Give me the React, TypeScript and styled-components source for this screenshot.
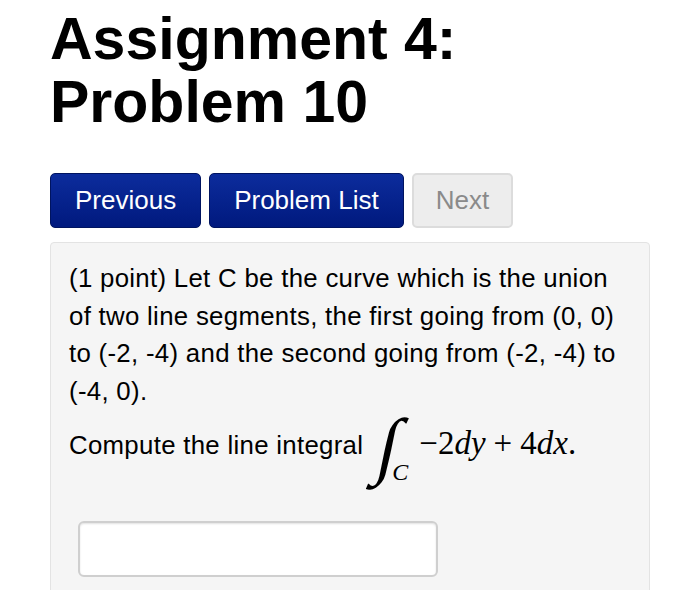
import styled, { createGlobalStyle } from 'styled-components';

const GlobalStyle = createGlobalStyle`
  html, body {
    margin: 0;
    padding: 0;
    background: #fff;
  }
  body {
    font-family: "Liberation Sans", Arial, Helvetica, sans-serif;
    color: #000;
  }
`;

const Page = styled.div`
  padding: 8px 50px 0 50px;
  width: 700px;
  height: 590px;
  box-sizing: border-box;
  overflow: hidden;
`;

const Title = styled.h1`
  margin: 0;
  font-size: 59px;
  line-height: 63px;
  font-weight: bold;
`;

const Nav = styled.div`
  display: flex;
  gap: 8px;
  margin-top: 39px;
`;

const NavButton = styled.button<{ $disabled?: boolean }>`
  height: 55px;
  padding: 0 24px;
  font-family: "Liberation Sans", Arial, sans-serif;
  font-size: 26px;
  border-radius: 5px;
  cursor: pointer;
  ${({ $disabled }) =>
    $disabled
      ? `
    background: #ededed;
    color: #8a8a8a;
    border: 2px solid #dcdcdc;
    padding: 0 22px;
  `
      : `
    background: linear-gradient(#0c2c9c, #00197e);
    color: #fff;
    border: 1px solid #001460;
  `}
`;

const Panel = styled.div`
  margin-top: 14px;
  background: #f5f5f5;
  border: 1px solid #e3e3e3;
  border-radius: 4px;
  padding: 17px 26px 40px 18px;
  height: 400px;
  box-sizing: border-box;
  font-size: 25.8px;
  letter-spacing: 0.3px;
  line-height: 37.5px;
`;

const Para = styled.p`
  margin: 0;
`;

const MathLine = styled.p`
  margin: -2px 0 0 0;
  line-height: 37.5px;
`;

const MathExpr = styled.span`
  margin-left: 16px;
  font-family: "Liberation Serif", "Times New Roman", serif;
  font-size: 33px;
  letter-spacing: 0;
`;

const IntegralSign = styled.span`
  position: relative;
  display: inline-block;
  font-size: 74px;
  line-height: 74px;
  vertical-align: -16px;
  width: 30px;
  margin-right: 10px;
  transform: skewX(-12deg);
`;

const Sub = styled.span`
  position: absolute;
  left: 19px;
  bottom: -2px;
  font-size: 24px;
  line-height: 24px;
  font-style: italic;
  transform: skewX(12deg);
`;

const Var = styled.i``;

const Op = styled.span`
  margin: 0 8px;
`;

const AnswerInput = styled.input`
  display: block;
  margin-top: 39px;
  margin-left: 9px;
  width: 360px;
  height: 56px;
  box-sizing: border-box;
  background: #fff;
  border: 2px solid #cfcfcf;
  border-radius: 6px;
  box-shadow: inset 0 1px 2px rgba(0, 0, 0, 0.12);
  font-size: 22px;
`;

export default function App() {
  return (
    <>
      <GlobalStyle />
      <Page>
        <Title>
          Assignment 4:
          <br />
          Problem 10
        </Title>
        <Nav>
          <NavButton>Previous</NavButton>
          <NavButton>Problem List</NavButton>
          <NavButton $disabled>Next</NavButton>
        </Nav>
        <Panel>
          <Para>
            (1 point) Let C be the curve which is the union of two line segments, the first
            going from (0, 0) to (-2, -4) and the second going from (-2, -4) to (-4, 0).
          </Para>
          <MathLine>
            Compute the line integral
            <MathExpr>
              <IntegralSign>
                ∫<Sub>C</Sub>
              </IntegralSign>
              −2<Var>dy</Var>
              <Op>+</Op>4<Var>dx</Var>.
            </MathExpr>
          </MathLine>
          <AnswerInput type="text" />
        </Panel>
      </Page>
    </>
  );
}
